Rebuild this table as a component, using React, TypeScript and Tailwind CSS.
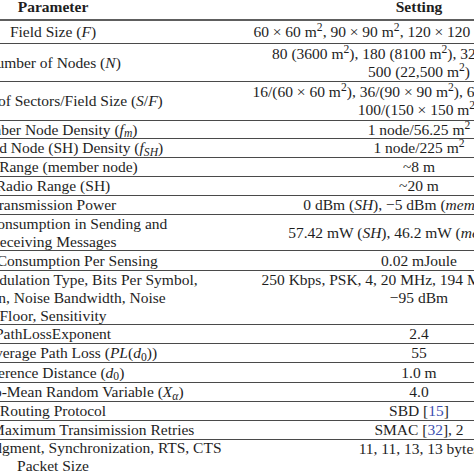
import React from "react";

type Line = { c: React.ReactNode; adj?: string };

type Row = {
  h: string;
  left: Line[];
  right: React.ReactNode[];
  rTop?: boolean;
};

const M2 = () => (
  <>
    m<sup>2</sup>
  </>
);

const Link = ({ children }: { children: React.ReactNode }) => (
  <span className="text-[#3b4fb0]">{children}</span>
);

const rows: Row[] = [
  {
    h: "h-[22px]",
    left: [{ c: <>Field Size (<i>F</i>)</> }],
    right: [
      <>
        60 × 60 <M2 />, 90 × 90 <M2 />, 120 × 120 <M2 />, 150 × 150 <M2 />
      </>,
    ],
  },
  {
    h: "h-[37px]",
    left: [{ c: <>Number of Nodes (<i>N</i>)</> }],
    right: [
      <>
        80 (3600 <M2 />), 180 (8100 <M2 />), 320 (14,400 <M2 />),
      </>,
      <>
        500 (22,500 <M2 />)
      </>,
    ],
  },
  {
    h: "h-[38px]",
    left: [
      {
        c: (
          <>
            Number of Sectors/Field Size (<i>S</i>/<i>F</i>)
          </>
        ),
      },
    ],
    right: [
      <>
        16/(60 × 60 <M2 />), 36/(90 × 90 <M2 />), 64/(120 × 120 <M2 />),
      </>,
      <>
        100/(150 × 150 <M2 />)
      </>,
    ],
  },
  {
    h: "h-[17px]",
    left: [
      {
        c: (
          <>
            Member Node Density (<i>f<sub>m</sub></i>)
          </>
        ),
      },
    ],
    right: [
      <>
        1 node/56.25 <M2 />
      </>,
    ],
  },
  {
    h: "h-[18px]",
    left: [
      {
        c: (
          <>
            Sector Head Node (SH) Density (<i>f<sub>SH</sub></i>)
          </>
        ),
        adj: "pr-[12px]",
      },
    ],
    right: [
      <>
        1 node/225 <M2 />
      </>,
    ],
  },
  {
    h: "h-[18px]",
    left: [{ c: <>Radio Range (member node)</>, adj: "pr-[10px]" }],
    right: [<>~8 m</>],
  },
  {
    h: "h-[18px]",
    left: [{ c: <>Radio Range (SH)</> }],
    right: [<>~20 m</>],
  },
  {
    h: "h-[18px]",
    left: [{ c: <>Transmission Power</> }],
    right: [
      <>
        0 dBm (<i>SH</i>), −5 dBm (<i>member node</i>)
      </>,
    ],
  },
  {
    h: "h-[35px]",
    left: [
      { c: <>Energy Consumption in Sending and</> },
      { c: <>Receiving Messages</> },
    ],
    right: [
      <>
        57.42 mW (<i>SH</i>), 46.2 mW (<i>member node</i>)
      </>,
    ],
  },
  {
    h: "h-[19px]",
    left: [{ c: <>Energy Consumption Per Sensing</> }],
    right: [<>0.02 mJoule</>],
  },
  {
    h: "h-[53px]",
    left: [
      { c: <>Data Rate, Modulation Type, Bits Per Symbol,</> },
      { c: <>Signal Gain, Noise Bandwidth, Noise</>, adj: "pr-[8px]" },
      { c: <>Floor, Sensitivity</> },
    ],
    right: [<>250 Kbps, PSK, 4, 20 MHz, 194 MHz, −100 dBm,</>, <>−95 dBm</>],
    rTop: true,
  },
  {
    h: "h-[18px]",
    left: [{ c: <>PathLossExponent</> }],
    right: [<>2.4</>],
  },
  {
    h: "h-[18px]",
    left: [
      {
        c: (
          <>
            Average Path Loss (<i>PL</i>(<i>d</i>
            <sub>0</sub>))
          </>
        ),
        adj: "pl-[36px]",
      },
    ],
    right: [<>55</>],
  },
  {
    h: "h-[19px]",
    left: [
      {
        c: (
          <>
            Reference Distance (<i>d</i>
            <sub>0</sub>)
          </>
        ),
        adj: "pr-[6px]",
      },
    ],
    right: [<>1.0 m</>],
  },
  {
    h: "h-[18px]",
    left: [
      {
        c: (
          <>
            Zero-Mean Random Variable (<i>X<sub>α</sub></i>)
          </>
        ),
        adj: "pl-[50px]",
      },
    ],
    right: [<>4.0</>],
  },
  {
    h: "h-[18px]",
    left: [{ c: <>Routing Protocol</> }],
    right: [
      <>
        SBD [<Link>15</Link>]
      </>,
    ],
  },
  {
    h: "h-[18px]",
    left: [
      { c: <>MAC Protocol, Maximum Transimission Retries</>, adj: "pr-[20px]" },
    ],
    right: [
      <>
        SMAC [<Link>32</Link>], 2
      </>,
    ],
  },
  {
    h: "h-[33px]",
    left: [
      { c: <>Data, Acknowledgment, Synchronization, RTS, CTS</>, adj: "pl-[10px]" },
      { c: <>Packet Size</> },
    ],
    right: [<>11, 11, 13, 13 bytes</>],
    rTop: true,
  },
];

function Cells({ row }: { row: Row }) {
  return (
    <div className={`flex w-[732px] -ml-[147px] ${row.h}`}>
      <div className="w-[400px] flex flex-col items-center justify-center">
        {row.left.map((l, i) => (
          <div key={i} className={`whitespace-nowrap leading-[18px] ${l.adj ?? ""}`}>
            {l.c}
          </div>
        ))}
      </div>
      <div
        className={`w-[332px] flex flex-col items-center ${
          row.rTop ? "justify-start" : "justify-center"
        }`}
      >
        {row.right.map((l, i) => (
          <div key={i} className="whitespace-nowrap leading-[18px]">
            {l}
          </div>
        ))}
      </div>
    </div>
  );
}

export default function App() {
  return (
    <div className="w-[474px] h-[474px] overflow-hidden bg-white text-[#1e1e1e] text-[15.5px] font-['Liberation_Serif','Times_New_Roman',serif]">
      <div className="-mt-[6px]">
        <div className="flex w-[732px] -ml-[147px] h-[25px] font-bold">
          <div className="w-[400px] flex items-center justify-center whitespace-nowrap">
            Parameter
          </div>
          <div className="w-[332px] flex items-center justify-center whitespace-nowrap">
            Setting
          </div>
        </div>
        <div className="h-[2px] bg-[#5e5e5e]" />
        {rows.map((r, i) => (
          <React.Fragment key={i}>
            <Cells row={r} />
            {i < rows.length - 1 && <div className="h-px bg-[#4a4a4a]" />}
          </React.Fragment>
        ))}
      </div>
    </div>
  );
}
